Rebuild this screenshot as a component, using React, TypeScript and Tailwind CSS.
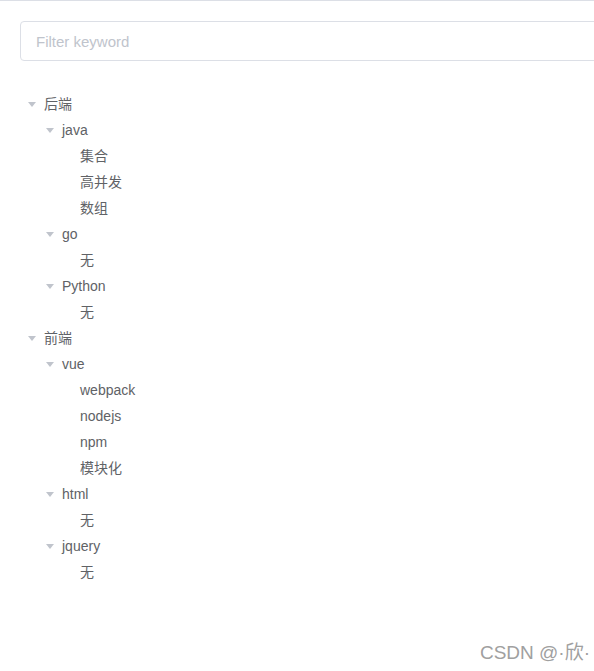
type Node = { label: string; children?: Node[] };

const data: Node[] = [
  {
    label: "后端",
    children: [
      { label: "java", children: [{ label: "集合" }, { label: "高并发" }, { label: "数组" }] },
      { label: "go", children: [{ label: "无" }] },
      { label: "Python", children: [{ label: "无" }] },
    ],
  },
  {
    label: "前端",
    children: [
      {
        label: "vue",
        children: [{ label: "webpack" }, { label: "nodejs" }, { label: "npm" }, { label: "模块化" }],
      },
      { label: "html", children: [{ label: "无" }] },
      { label: "jquery", children: [{ label: "无" }] },
    ],
  },
];

function Caret({ show }: { show: boolean }) {
  return (
    <span className="flex w-6 h-full items-center justify-center">
      {show && (
        <svg width="8" height="5" viewBox="0 0 8 5">
          <path d="M0 0 L8 0 L4 5 Z" fill="#c0c4cc" />
        </svg>
      )}
    </span>
  );
}

function TreeNode({ node, level }: { node: Node; level: number }) {
  const hasKids = !!node.children?.length;
  return (
    <div>
      <div className="flex h-[26px] items-center" style={{ paddingLeft: level * 18 }}>
        <Caret show={hasKids} />
        <span className="text-[14px] text-[#606266]">{node.label}</span>
      </div>
      {node.children?.map((c, i) => (
        <TreeNode key={i} node={c} level={level + 1} />
      ))}
    </div>
  );
}

export default function App() {
  return (
    <div
      className="relative h-[671px] w-[594px] overflow-hidden bg-white border-t border-[#dcdfe6]"
      style={{ fontFamily: '"Liberation Sans", Arial, "Noto Sans CJK SC", sans-serif' }}
    >
      <div className="pt-5 pl-5">
        <input
          placeholder="Filter keyword"
          className="h-10 w-[620px] rounded border border-[#dcdfe6] px-[15px] text-[15px] text-[#606266] outline-none placeholder:text-[#c0c4cc]"
        />
      </div>
      <div className="mt-[30px] pl-5">
        {data.map((n, i) => (
          <TreeNode key={i} node={n} level={0} />
        ))}
      </div>
      <div className="absolute bottom-[4px] right-[4px] text-[19px] text-[#a0a0a0]">CSDN @·欣·</div>
    </div>
  );
}
